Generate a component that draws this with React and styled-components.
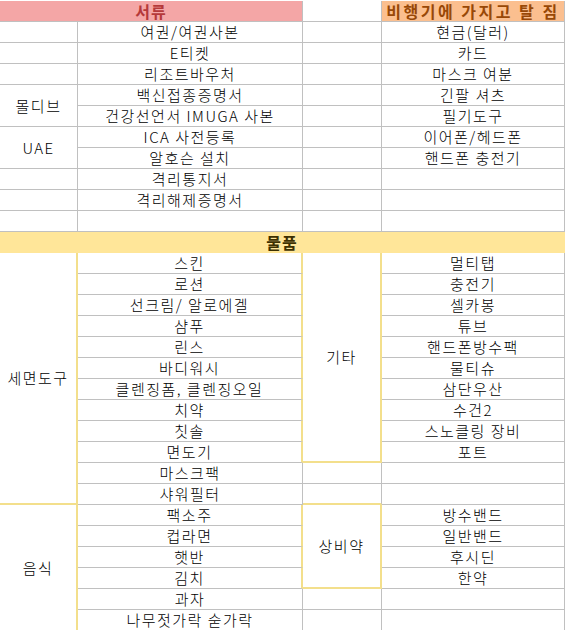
import React from 'react'
import styled, { createGlobalStyle } from 'styled-components'

const GRID = '#c0c0c0'
const GOLD = '#f3df8c'

const GlobalStyle = createGlobalStyle`
  html, body {
    margin: 0;
    padding: 0;
    background: #fff;
  }
  body {
    font-family: "Noto Sans CJK KR", "Liberation Sans", sans-serif;
  }
`

const Sheet = styled.div`
  display: grid;
  grid-template-columns: 78px 225px 79px 183px;
  grid-auto-rows: 21px;
  padding-top: 1px;
  width: 565px;
  height: 630px;
  overflow: hidden;
  font-size: 15px;
  font-weight: 300;
  letter-spacing: 1.5px;
  color: #000;
`

const edge = c => (c === GOLD ? `2px solid ${GOLD}` : `1px solid ${c || GRID}`)

const Cell = styled.div`
  box-sizing: border-box;
  grid-column: span ${p => p.$cols || 1};
  grid-row: span ${p => p.$rows || 1};
  display: flex;
  align-items: center;
  justify-content: center;
  border-right: ${p => edge(p.$r)};
  border-bottom: ${p => edge(p.$b)};
  background: ${p => p.$bg || '#fff'};
  white-space: nowrap;
  line-height: 20px;
`

const HeadCell = styled(Cell)`
  font-size: 16px;
  font-weight: bold;
  color: ${p => p.$ink};
  letter-spacing: ${p => p.$track || '1px'};
`

const papers = [
  ['여권/여권사본', '현금(달러)'],
  ['E티켓', '카드'],
  ['리조트바우처', '마스크 여분'],
  ['백신접종증명서', '긴팔 셔츠'],
  ['건강선언서 IMUGA 사본', '필기도구'],
  ['ICA 사전등록', '이어폰/헤드폰'],
  ['알호슨 설치', '핸드폰 충전기'],
  ['격리통지서', ''],
  ['격리해제증명서', ''],
  ['', ''],
]

// col A labels for the first block: row index -> [label, span]
const countries = { 3: ['몰디브', 2], 5: ['UAE', 2] }

const toiletries = [
  '스킨', '로션', '선크림/ 알로에겔', '샴푸', '린스', '바디워시',
  '클렌징폼, 클렌징오일', '치약', '칫솔', '면도기', '마스크팩', '샤워필터',
]
const extras = [
  '멀티탭', '충전기', '셀카봉', '튜브', '핸드폰방수팩',
  '물티슈', '삼단우산', '수건2', '스노클링 장비', '포트', '', '',
]

const food = ['팩소주', '컵라면', '햇반', '김치', '과자', '나무젓가락 숟가락']
const meds = ['방수밴드', '일반밴드', '후시딘', '한약', '', '']

function PaperRows() {
  const cells = []
  papers.forEach(([doc, carry], i) => {
    if (countries[i]) {
      const [label, span] = countries[i]
      cells.push(<Cell key={`a${i}`} $rows={span}>{label}</Cell>)
    } else if (!(i === 4 || i === 6)) {
      cells.push(<Cell key={`a${i}`} />)
    }
    cells.push(<Cell key={`b${i}`}>{doc}</Cell>)
    cells.push(<Cell key={`c${i}`} />)
    cells.push(<Cell key={`d${i}`}>{carry}</Cell>)
  })
  return cells
}

function ToiletRows() {
  const cells = [
    <Cell key="wash" $rows={12} $r={GOLD} $b={GOLD}>세면도구</Cell>,
  ]
  toiletries.forEach((item, i) => {
    cells.push(<Cell key={`t${i}`} $r={i < 10 ? GOLD : undefined}>{item}</Cell>)
    if (i === 0) {
      cells.push(<Cell key="etc" $rows={10} $r={GOLD} $b={GOLD}>기타</Cell>)
    }
    if (i >= 10) {
      cells.push(<Cell key={`e${i}`} $b={i === 11 ? GOLD : undefined} />)
    }
    cells.push(<Cell key={`x${i}`}>{extras[i]}</Cell>)
  })
  return cells
}

function FoodRows() {
  const cells = [<Cell key="food" $rows={6} $r={GOLD}>음식</Cell>]
  food.forEach((item, i) => {
    cells.push(<Cell key={`f${i}`} $r={i < 4 ? GOLD : undefined}>{item}</Cell>)
    if (i === 0) {
      cells.push(<Cell key="meds" $rows={4} $r={GOLD} $b={GOLD}>상비약</Cell>)
    }
    if (i >= 4) cells.push(<Cell key={`m${i}`} />)
    cells.push(<Cell key={`md${i}`}>{meds[i]}</Cell>)
  })
  return cells
}

export default function App() {
  return (
    <>
      <GlobalStyle />
      <Sheet>
        <HeadCell $cols={2} $bg="#f4a6a6" $ink="#b5393a">서류</HeadCell>
        <Cell />
        <HeadCell $bg="#fbbf8f" $ink="#984807" $track="2.5px">비행기에 가지고 탈 짐</HeadCell>
        <PaperRows />
        <HeadCell $cols={4} $bg="#ffe699" $b="#ffe699" $r="#ffe699" $ink="#3d3000">물품</HeadCell>
        <ToiletRows />
        <FoodRows />
      </Sheet>
    </>
  )
}
